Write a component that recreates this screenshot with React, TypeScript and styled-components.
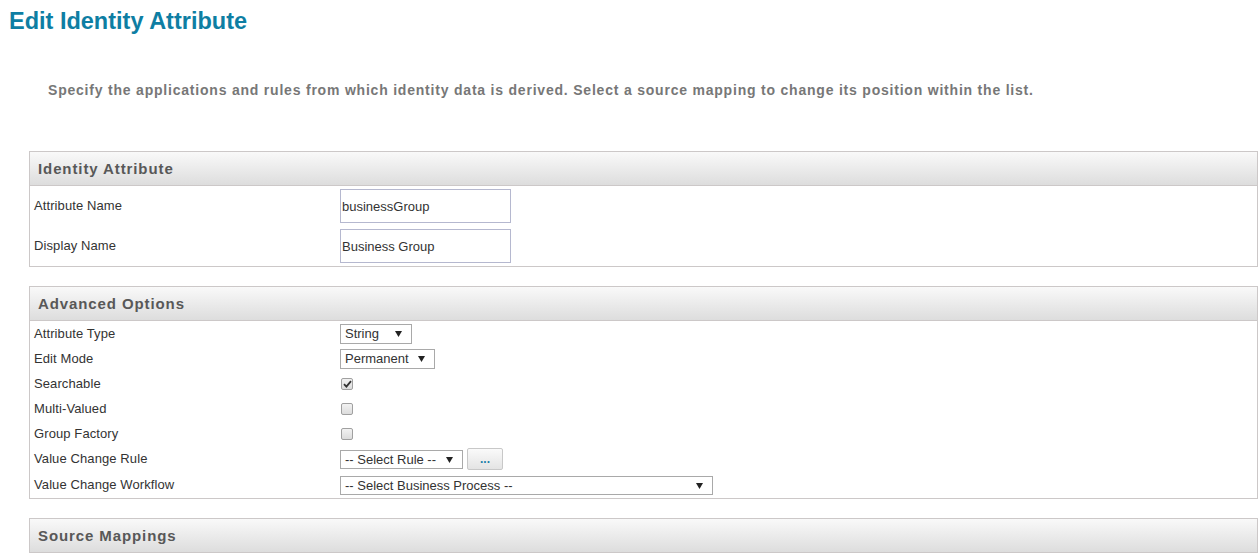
import React from 'react'
import styled, {createGlobalStyle} from 'styled-components'

const GlobalStyle = createGlobalStyle`
  body {
    margin: 0;
    background: #fff;
    font-family: "Liberation Sans", Arial, sans-serif;
    color: #333;
  }
`

const Page = styled.div`
  padding: 0 2px 40px 0;
`

const Title = styled.h1`
  margin: 8px 0 0 9px;
  font-size: 23.5px;
  line-height: 27px;
  font-weight: bold;
  color: #0e7ea3;
`

const Intro = styled.p`
  margin: 47px 0 0 48px;
  font-size: 14px;
  line-height: 16px;
  font-weight: bold;
  letter-spacing: 0.79px;
  color: #777;
`

const Sections = styled.div`
  display: flex;
  flex-direction: column;
  gap: 19px;
  margin: 53px 0 0 29px;
`

const Panel = styled.section`
  border: 1px solid #ccc8c8;
  background: #fff;
`

const PanelHeader = styled.div`
  box-sizing: border-box;
  height: 34px;
  display: flex;
  align-items: center;
  padding: 0 0 1px 8px;
  border-bottom: 1px solid #ccc8c8;
  background: linear-gradient(to bottom, #f9f9f9 0%, #dddddd 100%);
  font-size: 15px;
  font-weight: bold;
  letter-spacing: 0.9px;
  color: #585858;
`

const Row = styled.div<{$h: number}>`
  display: grid;
  grid-template-columns: 310px 1fr;
  align-items: center;
  height: ${p => p.$h}px;
`

const Label = styled.div`
  padding: 0 0 1px 4px;
  font-size: 13px;
  letter-spacing: 0.1px;
  color: #333;
`

const Value = styled.div`
  display: flex;
  align-items: center;
  gap: 4px;
`

const TextInput = styled.input`
  box-sizing: border-box;
  width: 171px;
  height: 34px;
  padding: 0 0 0 1px;
  border: 1px solid #b5b8cf;
  font-family: "Liberation Sans", Arial, sans-serif;
  font-size: 13px;
  color: #333;
  outline: none;
`

const SelectBox = styled.div<{$w: number; $h?: number}>`
  box-sizing: border-box;
  width: ${p => p.$w}px;
  height: ${p => p.$h || 20}px;
  display: flex;
  align-items: center;
  justify-content: space-between;
  padding: 0 9px 0 4px;
  border: 1px solid #a9a9a9;
  background: #fff;
  font-size: 13px;
  color: #333;
  white-space: nowrap;
`

const Arrow = () => (
  <svg width="7" height="7" viewBox="0 0 7 7">
    <path d="M0 1 L7 1 L3.5 7 Z" fill="#222" />
  </svg>
)

const Select = ({text, w, h}: {text: string; w: number; h?: number}) => (
  <SelectBox $w={w} $h={h}>
    <span>{text}</span>
    <Arrow />
  </SelectBox>
)

const Check = styled.span`
  box-sizing: border-box;
  width: 12px;
  height: 12px;
  margin-left: 1px;
  display: inline-flex;
  align-items: center;
  justify-content: center;
  border: 1px solid #a0a0a0;
  border-radius: 2px;
  background: linear-gradient(to bottom, #f2f2f2, #dcdcdc);
`

const CheckBox = ({checked}: {checked?: boolean}) => (
  <Check>
    {checked ? (
      <svg width="9" height="8" viewBox="0 0 9 8">
        <path d="M1 4.2 L3.4 6.6 L8 1.2" fill="none" stroke="#333" strokeWidth="1.8" />
      </svg>
    ) : null}
  </Check>
)

const MoreButton = styled.button`
  box-sizing: border-box;
  width: 36px;
  height: 22px;
  padding: 0;
  border: 1px solid #c8c8c8;
  border-radius: 2px;
  background: linear-gradient(to bottom, #fafafa, #e4e4e4);
  color: #1b7fa8;
  font-family: "Liberation Sans", Arial, sans-serif;
  font-size: 12px;
  font-weight: bold;
  line-height: 12px;
`

export default function App() {
  return <Page>
    <GlobalStyle />
    <Title>Edit Identity Attribute</Title>
    <Intro>
      Specify the applications and rules from which identity data is derived. Select a source mapping to change its position within the list.
    </Intro>
    <Sections>
      <Panel>
        <PanelHeader>Identity Attribute</PanelHeader>
        <Row $h={40}>
          <Label>Attribute Name</Label>
          <Value><TextInput defaultValue="businessGroup" /></Value>
        </Row>
        <Row $h={40}>
          <Label>Display Name</Label>
          <Value><TextInput defaultValue="Business Group" /></Value>
        </Row>
      </Panel>

      <Panel>
        <PanelHeader>Advanced Options</PanelHeader>
        <Row $h={25}>
          <Label>Attribute Type</Label>
          <Value><Select text="String" w={72} /></Value>
        </Row>
        <Row $h={25}>
          <Label>Edit Mode</Label>
          <Value><Select text="Permanent" w={95} /></Value>
        </Row>
        <Row $h={25}>
          <Label>Searchable</Label>
          <Value><CheckBox checked /></Value>
        </Row>
        <Row $h={25}>
          <Label>Multi-Valued</Label>
          <Value><CheckBox /></Value>
        </Row>
        <Row $h={25}>
          <Label>Group Factory</Label>
          <Value><CheckBox /></Value>
        </Row>
        <Row $h={26}>
          <Label>Value Change Rule</Label>
          <Value>
            <Select text="-- Select Rule --" w={123} h={19} />
            <MoreButton>...</MoreButton>
          </Value>
        </Row>
        <Row $h={26}>
          <Label>Value Change Workflow</Label>
          <Value><Select text="-- Select Business Process --" w={373} h={19} /></Value>
        </Row>
      </Panel>

      <Panel>
        <PanelHeader>Source Mappings</PanelHeader>
        <Row $h={40}>
          <Label></Label>
          <Value></Value>
        </Row>
      </Panel>
    </Sections>
  </Page>
}
